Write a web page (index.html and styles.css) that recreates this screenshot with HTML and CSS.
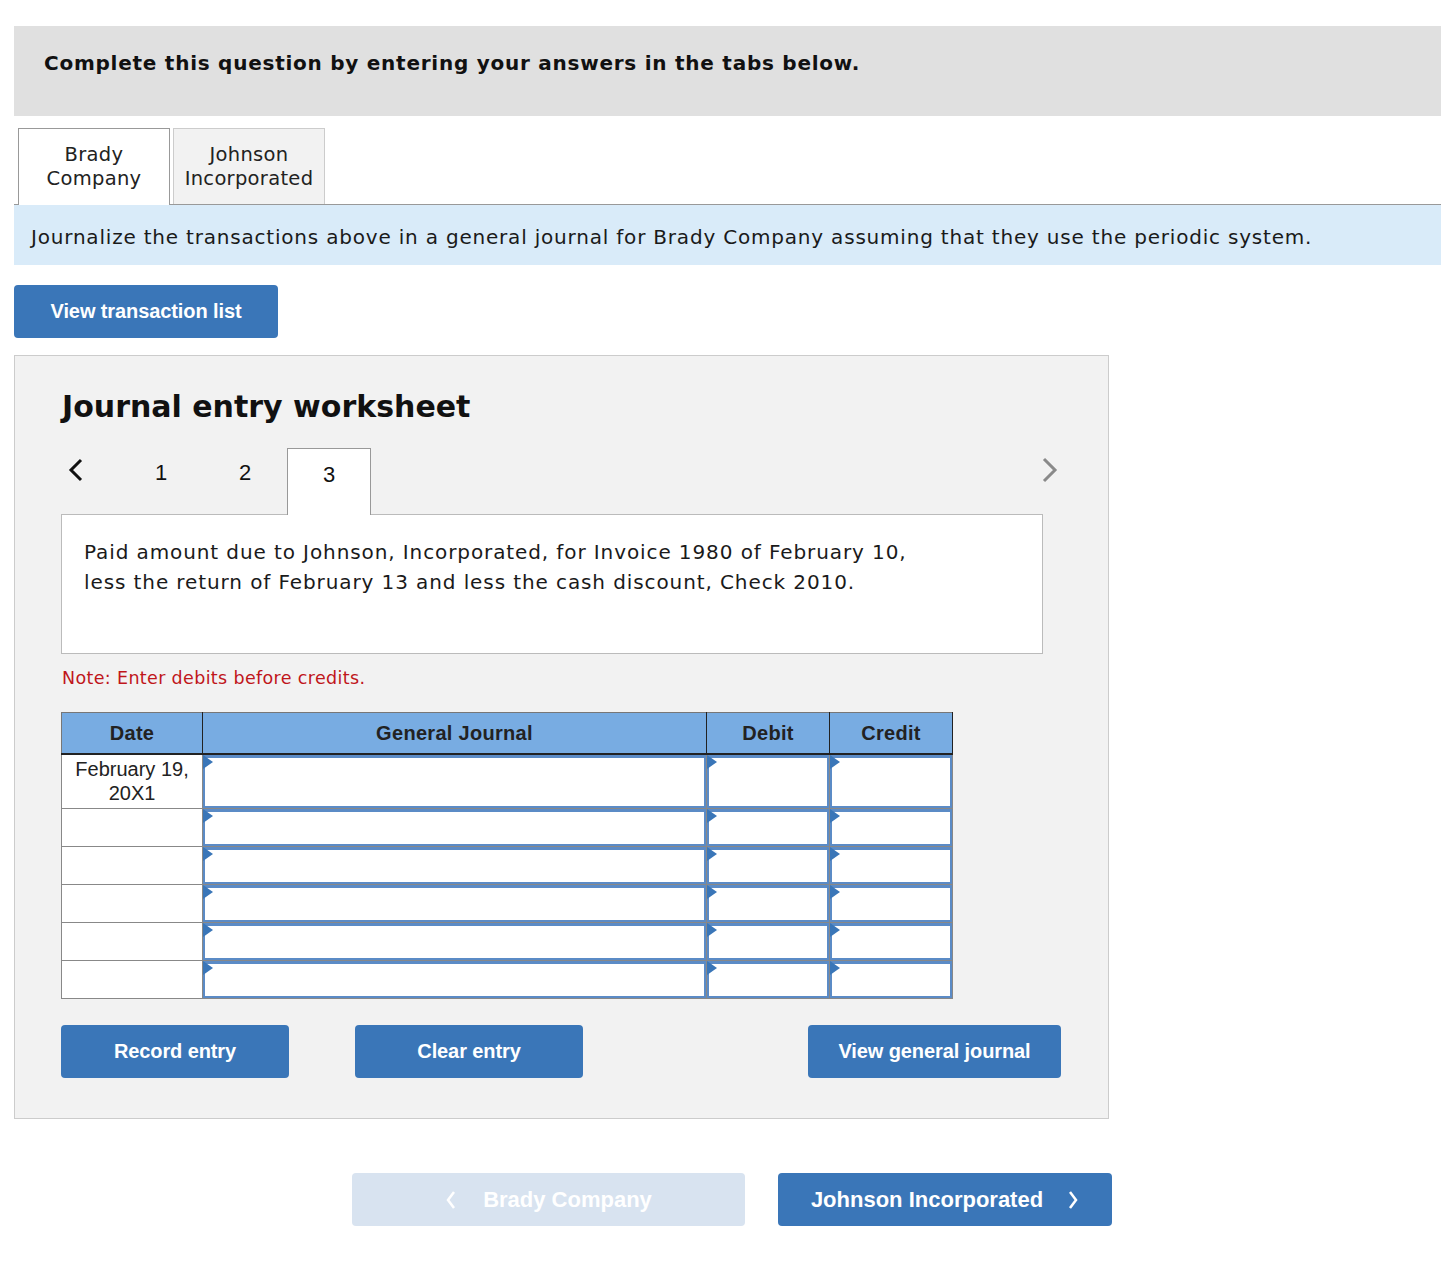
FILE: index.html
```html
<!DOCTYPE html>
<html lang="en">
<head>
  <meta charset="UTF-8" />
  <title>Journal entry worksheet</title>
  <link rel="stylesheet" href="styles.css">
</head>
<body>
  <div class="page">
    <div class="intro">Complete this question by entering your answers in the tabs below.</div>

    <div class="tabs">
      <div class="tab active">Brady<br>Company</div>
      <div class="tab">Johnson<br>Incorporated</div>
    </div>

    <div class="instruction">Journalize the transactions above in a general journal for Brady Company assuming that they use the periodic system.</div>

    <button class="btn btn-list">View transaction list</button>

    <div class="worksheet">
      <h2 class="ws-title">Journal entry worksheet</h2>

      <div class="steps">
        <span class="step-arrow prev">
          <svg width="16" height="24" viewBox="0 0 16 24"><path d="M14 2 L4 12 L14 22" fill="none" stroke="#111" stroke-width="3"/></svg>
        </span>
        <span class="step">1</span>
        <span class="step">2</span>
        <span class="step current">3</span>
        <span class="step-fill"></span>
        <span class="step-arrow next">
          <svg width="17" height="26" viewBox="0 0 17 26"><path d="M3 2 L14 13 L3 24" fill="none" stroke="#8a8a8a" stroke-width="3"/></svg>
        </span>
      </div>

      <div class="desc">Paid amount due to Johnson, Incorporated, for Invoice 1980 of February 10,<br>less the return of February 13 and less the cash discount, Check 2010.</div>

      <p class="note">Note: Enter debits before credits.</p>

      <table class="journal">
        <thead>
          <tr><th class="c-date">Date</th><th class="c-acct">General Journal</th><th class="c-amt">Debit</th><th class="c-amt">Credit</th></tr>
        </thead>
        <tbody>
          <tr class="first"><td class="date">February 19,<br>20X1</td><td><div class="cell"></div></td><td><div class="cell"></div></td><td><div class="cell"></div></td></tr>
          <tr><td class="date"></td><td><div class="cell"></div></td><td><div class="cell"></div></td><td><div class="cell"></div></td></tr>
          <tr><td class="date"></td><td><div class="cell"></div></td><td><div class="cell"></div></td><td><div class="cell"></div></td></tr>
          <tr><td class="date"></td><td><div class="cell"></div></td><td><div class="cell"></div></td><td><div class="cell"></div></td></tr>
          <tr><td class="date"></td><td><div class="cell"></div></td><td><div class="cell"></div></td><td><div class="cell"></div></td></tr>
          <tr><td class="date"></td><td><div class="cell"></div></td><td><div class="cell"></div></td><td><div class="cell"></div></td></tr>
        </tbody>
      </table>

      <div class="actions">
        <button class="btn btn-record">Record entry</button>
        <button class="btn btn-clear">Clear entry</button>
        <button class="btn btn-view">View general journal</button>
      </div>
    </div>

    <div class="bottom-nav">
      <button class="btn nav-prev">
        <svg class="chev" width="12" height="20" viewBox="0 0 12 20"><path d="M9 2 L3 10 L9 18" fill="none" stroke="#fff" stroke-width="2.5"/></svg>
        Brady Company
      </button>
      <button class="btn nav-next">
        Johnson Incorporated
        <svg class="chev" width="12" height="20" viewBox="0 0 12 20"><path d="M3 2 L9 10 L3 18" fill="none" stroke="#fff" stroke-width="2.5"/></svg>
      </button>
    </div>
  </div>
</body>
</html>
```

FILE: styles.css
```css
body { margin:0; background:#fff; font-family:"DejaVu Sans", Verdana, sans-serif; color:#111; }
.page { padding:26px 0 40px 14px; }

.intro { background:#e0e0e0; height:90px; box-sizing:border-box; padding:25px 30px; font-weight:bold; font-size:20px; letter-spacing:0.75px; color:#111; }

.tabs { display:flex; gap:3px; margin-top:12px; padding-left:4px; border-bottom:1px solid #999; height:76px; }
.tab { width:152px; box-sizing:border-box; border:1px solid #ccc; border-bottom:none; background:#f2f2f2; text-align:center; font-size:19.5px; letter-spacing:0.3px; line-height:24px; padding-top:14px; color:#222; }
.tab.active { background:#fff; border-color:#999; height:77px; position:relative; }

.instruction { background:#d9ebf9; height:60px; box-sizing:border-box; padding:20px 17px 0; font-size:20px; color:#1a1a1a; letter-spacing:0.8px; }

.btn { font-family:"Liberation Sans", Arial, sans-serif; font-weight:bold; font-size:20px; color:#fff; background:#3a76b8; border:none; border-radius:4px; height:53px; cursor:pointer; letter-spacing:-0.1px; }
.btn-list { margin-top:20px; width:264px; display:block; }

.worksheet { margin-top:17px; width:1095px; box-sizing:border-box; border:1px solid #ccc; background:#f2f2f2; padding:33px 46px 40px 46px; }
.ws-title { margin:0 0 0 1px; font-size:30px; font-weight:bold; color:#111; letter-spacing:0; }

.steps { display:flex; align-items:flex-end; margin-top:23px; height:67px; }
.step-arrow { display:flex; height:67px; box-sizing:border-box; }
.step-arrow.prev { width:58px; padding-left:6px; padding-top:11px; }
.step-arrow.next { padding-right:4px; padding-top:10px; }
.step { width:84px; height:67px; box-sizing:border-box; text-align:center; font-family:"Liberation Sans", Arial, sans-serif; font-size:22px; padding-top:13px; color:#111; }
.step.current { background:#fff; border:1px solid #999; border-bottom:none; position:relative; top:1px; }
.step-fill { flex:1; }

.desc { width:982px; height:140px; box-sizing:border-box; background:#fff; border:1px solid #bbb; padding:22px 22px; font-size:20px; line-height:30px; color:#1a1a1a; letter-spacing:0.9px; }

.note { margin:14px 0 0 1px; font-size:17.5px; color:#c0161b; letter-spacing:0.35px; }

.journal { margin-top:24px; border-collapse:collapse; font-family:"Liberation Sans", Arial, sans-serif; }
.journal th { background:#78ace2; height:40px; padding:0; font-size:20px; font-weight:bold; color:#222; border:1px solid #222; border-top-color:#777; border-bottom:2px solid #222; letter-spacing:0.3px; }
.journal th:first-child { border-left-color:#777; }
.c-date { width:140px; }
.c-acct { width:503px; }
.c-amt { width:122px; }
.journal td { padding:0; height:37px; border:1px solid #888; background:#fff; vertical-align:top; }
.journal tr.first td { height:53px; }
.journal td.date { text-align:center; font-size:20px; line-height:24px; color:#222; padding-top:2px; box-sizing:border-box; }
.cell { position:relative; box-sizing:border-box; border:2px solid #5b8bc6; border-top-width:3px; background:#fff; }
.journal tr.first .cell { height:53px; }
.journal tr:not(.first) .cell { height:37px; }
.cell::before { content:""; position:absolute; left:-2px; top:-3px; border-left:10px solid #3a76b8; border-top:7px solid transparent; border-bottom:7px solid transparent; }

.actions { display:flex; margin-top:26px; width:1000px; }
.btn-record { width:228px; }
.btn-clear { width:228px; margin-left:66px; }
.btn-view { width:253px; margin-left:auto; }

.bottom-nav { display:flex; gap:33px; margin-left:338px; margin-top:54px; }
.nav-prev, .nav-next { display:flex; align-items:center; justify-content:center; font-size:22px; letter-spacing:0; }
.nav-prev { width:393px; background:#d8e3f0; }
.nav-next { width:334px; }
.nav-prev .chev { margin-right:26px; }
.nav-next .chev { margin-left:24px; }
```
